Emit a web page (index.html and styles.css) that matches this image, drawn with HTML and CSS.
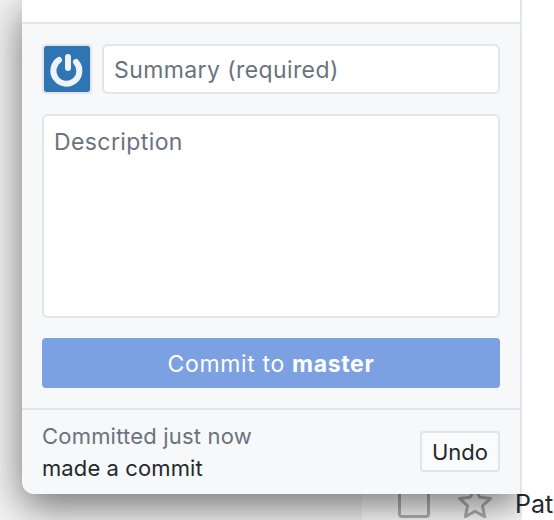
FILE: index.html
```html
<!DOCTYPE html>
<html lang="en">
<head>
    <meta charset="UTF-8">
    <title>Commit</title>
    <link rel="stylesheet" href="styles.css">
</head>
<body>
    <div class="page">
        <div class="file-row">
            <span class="checkbox"></span>
            <svg class="star" width="36" height="34" viewBox="0 0 36 34">
                <path d="M18 3l4.600 10.200 11 1.200-8.200 7.400 2.300 10.900L18 27.200l-9.700 5.500 2.300-10.900-8.200-7.400 11-1.200z" fill="none" stroke="#b4b4b4" stroke-width="3" stroke-linejoin="round"/>
            </svg>
            <span class="file-name">Pat</span>
        </div>
    </div>

    <div class="commit-panel">
        <div class="panel-top"></div>
        <form class="commit-form">
            <div class="summary-row">
                <div class="avatar">
                    <svg width="46" height="46" viewBox="0 0 46 46">
                        <path d="M15 14A13 13 0 1 0 32 16" fill="none" stroke="#eef3f8" stroke-width="6" stroke-linecap="round"/>
                        <path d="M24 11v11" fill="none" stroke="#eef3f8" stroke-width="6" stroke-linecap="round"/>
                    </svg>
                </div>
                <div class="field summary-field">Summary (required)</div>
            </div>
            <div class="field description-field">Description</div>
            <div class="commit-button">Commit to&nbsp;<b>master</b></div>
        </form>
        <div class="last-commit">
            <div class="last-commit-text">
                <div class="commit-time">Committed just now</div>
                <div class="commit-message">made a commit</div>
            </div>
            <div class="undo-button">Undo</div>
        </div>
    </div>
</body>
</html>
```

FILE: styles.css
```css
html, body {
    margin: 0;
    height: 520px;
    overflow: hidden;
    background-color: #fff;
    font-family: Inter, "Liberation Sans", sans-serif;
}

.page {
    height: 520px;
    width: 522px;
    display: flex;
    flex-direction: column;
    justify-content: flex-end;
    background: linear-gradient(to right, #f4f4f4 362px, #fff 362px);
}

.file-row {
    height: 34px;
    display: flex;
    align-items: flex-end;
    padding-left: 398px;
    margin-bottom: 2px;
}

.checkbox {
    flex: none;
    width: 32px;
    height: 34px;
    border: 3px solid #b4b4b4;
    border-radius: 4px;
    box-sizing: border-box;
    margin-right: 27px;
}

.star {
    flex: none;
}

.file-name {
    flex: none;
    font-size: 25px;
    line-height: 30px;
    color: #24292e;
    margin-left: 22px;
    margin-bottom: -1px;
}

.commit-panel {
    position: absolute;
    top: 0;
    left: 22px;
    width: 500px;
    height: 494px;
    box-sizing: border-box;
    display: flex;
    flex-direction: column;
    background-color: #f6f8fa;
    border-right: 2px solid #e1e4e8;
    border-radius: 0 0 0 12px;
    box-shadow: 0 12px 40px rgba(0, 0, 0, 0.55);
    clip-path: inset(-60px 0 -60px -60px);
}

.panel-top {
    height: 22px;
    background-color: #fff;
    border-bottom: 2px solid #e1e4e8;
}

.commit-form {
    padding: 20px;
    border-bottom: 2px solid #e1e4e8;
}

.summary-row {
    display: flex;
    gap: 10px;
    margin-bottom: 20px;
}

.avatar {
    width: 46px;
    height: 46px;
    border: 2px solid #e1e4e8;
    border-radius: 4px;
    background-color: #2f74b3;
    background-clip: padding-box;
}

.field {
    box-sizing: border-box;
    flex: 1;
    background-color: #fff;
    border: 2px solid #e1e4e8;
    border-radius: 6px;
    color: #6a737d;
    font-size: 23px;
    letter-spacing: 0.4px;
    padding: 0 10px;
}

.summary-field {
    height: 50px;
    line-height: 48px;
}

.description-field {
    height: 204px;
    padding-top: 11px;
    line-height: 30px;
    margin-bottom: 20px;
}

.commit-button {
    height: 50px;
    padding-top: 1px;
    box-sizing: border-box;
    display: flex;
    align-items: center;
    justify-content: center;
    background-color: #7ba1e2;
    border-radius: 4px;
    color: #fff;
    font-size: 23px;
    letter-spacing: 0.65px;
}

.last-commit {
    flex: 1;
    display: flex;
    align-items: center;
    justify-content: space-between;
    padding: 0 20px;
}

.last-commit-text {
    padding-bottom: 1px;
}

.commit-time {
    color: #6a737d;
    font-size: 22px;
    letter-spacing: 0.2px;
    line-height: 32px;
}

.commit-message {
    color: #24292e;
    font-size: 22px;
    letter-spacing: 0.1px;
    line-height: 32px;
}

.undo-button {
    box-sizing: border-box;
    width: 80px;
    height: 41px;
    margin-top: -1px;
    display: flex;
    align-items: center;
    justify-content: center;
    background-color: #fafbfc;
    border: 2px solid #e1e4e8;
    border-radius: 4px;
    color: #24292e;
    font-size: 22px;
}
```
